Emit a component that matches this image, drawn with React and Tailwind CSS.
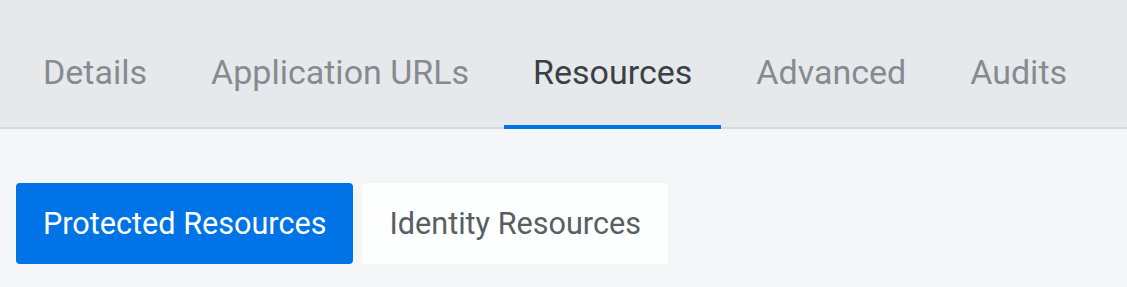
import React from "react";

const TABS = ["Details", "Application URLs", "Resources", "Advanced", "Audits"];

const App = () => {
  return (
    <div className="w-full h-[287px] bg-[#f5f6f8] font-['Roboto',sans-serif] overflow-hidden">
      <div className="flex flex-row items-end gap-[6px] h-[129px] pl-[14px] bg-[#e6e9ec] border-b-2 border-[#d7dbdf]">
        {TABS.map((tab) => (
          <div
            key={tab}
            className={
              tab === "Resources"
                ? "px-[29px] h-[126px] -mb-[2px] flex items-center pt-[16px] text-[34px] text-[#3b4045] border-b-4 border-[#0073e6]"
                : "px-[29px] h-[126px] -mb-[2px] flex items-center pt-[16px] text-[34px] text-[#878b8f] border-b-4 border-transparent"
            }
          >
            {tab}
          </div>
        ))}
      </div>
      <div className="flex flex-row gap-[9px] px-[16px] pt-[54px]">
        <button className="h-[81px] px-[27px] rounded-[4px] bg-[#0073e6] text-white text-[30.6px]">
          Protected Resources
        </button>
        <button className="h-[81px] px-[27px] rounded-[4px] bg-[#fdfefe] text-[#585e65] text-[30.6px]">
          Identity Resources
        </button>
      </div>
    </div>
  );
};

export default App;
